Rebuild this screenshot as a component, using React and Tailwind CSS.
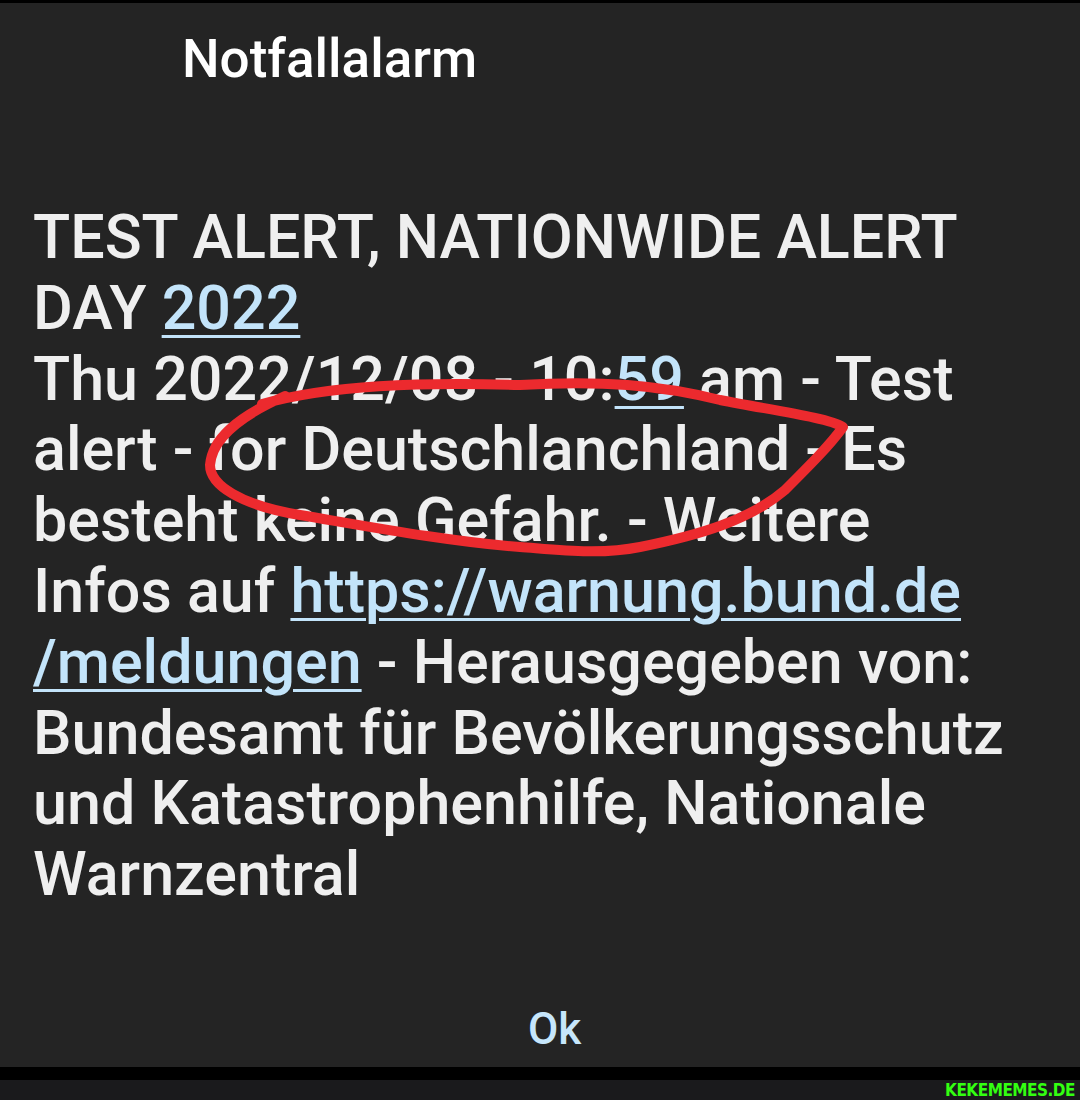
import React from "react";

const Link = ({ children }) => (
  <span className="text-[#c3e4fa] underline decoration-[3px] underline-offset-[6px]">{children}</span>
);

export default function App() {
  return (
    <div className="w-[1080px] h-[1100px] bg-black flex flex-col overflow-hidden" style={{ fontFamily: "Roboto, 'Noto Sans', sans-serif" }}>
      <div className="h-[3px] bg-black" />
      <div className="relative h-[1064px] bg-[#242424] flex flex-col">
        <div className="pl-[182px] pt-[24px] text-[53px] leading-[64px] font-medium text-white">Notfallalarm</div>
        <div className="pl-[33px] pt-[111px] text-[61px] leading-[70.8px] font-medium text-[#efefef]">
          <div>TEST ALERT, NATIONWIDE ALERT</div>
          <div>DAY <Link>2022</Link></div>
          <div>Thu 2022/12/08 - 10:<Link>59</Link> am - Test</div>
          <div>alert - for Deutschlanchland - Es</div>
          <div>besteht keine Gefahr. - Weitere</div>
          <div>Infos auf <Link>https://warnung.bund.de</Link></div>
          <div><Link>/meldungen</Link> - Herausgegeben von:</div>
          <div>Bundesamt für Bevölkerungsschutz</div>
          <div>und Katastrophenhilfe, Nationale</div>
          <div>Warnzentral</div>
        </div>
        <div className="mt-auto mb-[8px] pl-[528px] text-[44px] leading-[60px] font-medium text-[#c6e6fb]">Ok</div>
        <svg className="absolute left-0 top-0 pointer-events-none" width="1080" height="1064" viewBox="0 3 1080 1064">
          <path
            d="M 262 404 C 330 385, 420 382, 520 385 C 600 380, 660 385, 720 400 C 770 410, 830 418, 843 427 C 830 445, 810 465, 785 490 C 750 520, 700 535, 640 547 C 600 555, 560 550, 520 547 C 450 542, 360 525, 300 515 C 240 505, 210 485, 210 465 C 212 440, 235 418, 285 396"
            fill="none"
            stroke="#ec2a2e"
            strokeWidth="10"
            strokeLinecap="round"
            strokeLinejoin="round"
          />
        </svg>
      </div>
      <div className="h-[13px] bg-black" />
      <div className="flex-1 bg-[#1a1a1c] flex justify-end items-center pr-[5px]">
        <span className="text-[#33ff11] font-bold text-[17px] leading-none tracking-[-0.5px]" style={{ fontFamily: "'Liberation Sans Narrow', 'DejaVu Sans Condensed', sans-serif" }}>KEKEMEMES.DE</span>
      </div>
    </div>
  );
}
